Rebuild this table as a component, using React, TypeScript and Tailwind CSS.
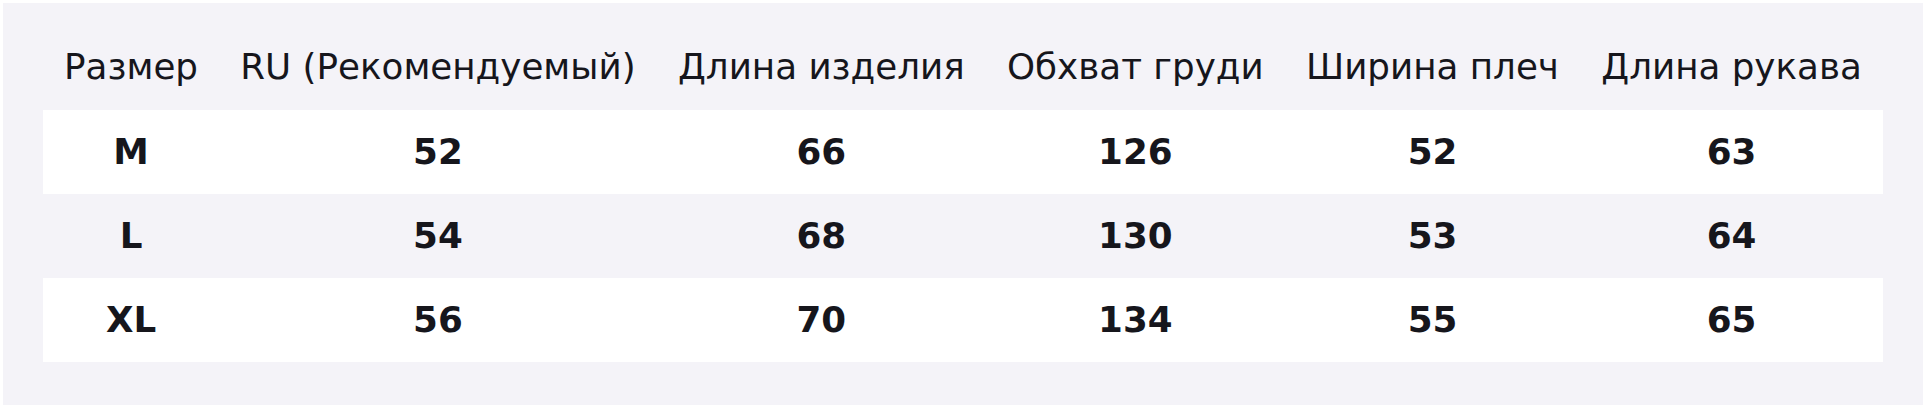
const headers = ['Размер', 'RU (Рекомендуемый)', 'Длина изделия', 'Обхват груди', 'Ширина плеч', 'Длина рукава']

const rows = [
  ['M', '52', '66', '126', '52', '63'],
  ['L', '54', '68', '130', '53', '64'],
  ['XL', '56', '70', '134', '55', '65'],
]

export default function App() {
  return (
    <div className="h-[408px] w-[1926px] bg-white p-[3px] font-['DejaVu_Sans',sans-serif] text-[#16161c]">
      <div className="h-full bg-[#f4f3f8] px-10 pt-[21px]">
        <table className="w-full border-collapse">
          <thead>
            <tr>
              {headers.map((h) => (
                <th
                  key={h}
                  className="whitespace-nowrap px-[21px] py-[22px] text-center text-[35.7px] font-normal leading-[42px]"
                >
                  {h}
                </th>
              ))}
            </tr>
          </thead>
          <tbody>
            {rows.map((row, i) => (
              <tr key={row[0]} className={i % 2 === 0 ? 'bg-white' : 'bg-[#f4f3f8]'}>
                {row.map((cell, j) => (
                  <td
                    key={j}
                    className="h-[84px] px-[21px] py-0 text-center text-[35.7px] font-bold leading-[42px]"
                  >
                    {cell}
                  </td>
                ))}
              </tr>
            ))}
          </tbody>
        </table>
      </div>
    </div>
  )
}
